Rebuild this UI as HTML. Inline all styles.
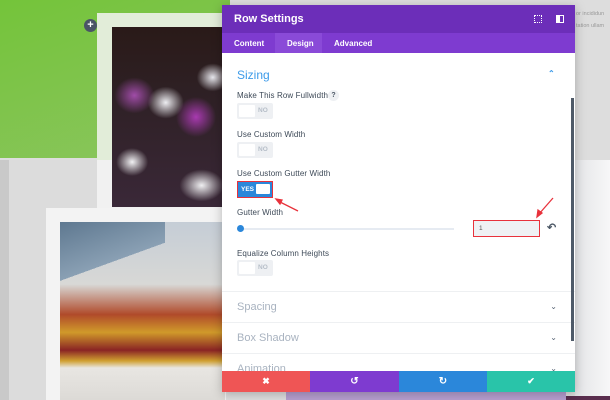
<!DOCTYPE html>
<html><head><meta charset="utf-8"><style>
*{margin:0;padding:0;box-sizing:border-box}
body{width:610px;height:400px;overflow:hidden;position:relative;background:#dedede;font-family:"Liberation Sans",sans-serif}
.abs{position:absolute}
.lbl{position:absolute;left:15px;font-size:8px;color:#3e4a58;letter-spacing:0.1px}
.tog{position:absolute;left:15px;width:36px;height:16px;background:#eef0f3;border-radius:2px}
.tog i{position:absolute;left:2px;top:2px;width:16px;height:12px;background:#fff;border-radius:1px}
.tog b{position:absolute;left:21px;top:4px;font-size:6.5px;color:#b6bec8}
.sec{position:absolute;left:15px;font-size:11px;color:#a9b3c0}
.chev{position:absolute;right:18px;font-size:8px;color:#5a6676}
.hr{position:absolute;left:0;width:100%;height:1px;background:#eef0f2}
</style></head><body>
<div class="abs" style="left:0;top:0;width:230px;height:158px;background:linear-gradient(160deg,#74c43a,#8cc560)"></div>
<div class="abs" style="left:0;top:160px;width:9px;height:240px;background:#c9c9c9"></div>
<div class="abs" style="left:9px;top:160px;width:90px;height:240px;background:#dcdcdc"></div>
<div class="abs" style="left:575px;top:0;width:35px;height:160px;background:#dddddd"></div>
<div class="abs" style="left:575px;top:160px;width:35px;height:240px;background:linear-gradient(90deg,#e4e5e7,#f7f7f8)"></div>
<div class="abs" style="left:576px;top:8px;font-size:5.5px;color:#999;line-height:12px">or incididun<br>tation ullam</div>
<div class="abs" style="left:97px;top:13px;width:130px;height:210px;background:#e2edd9"></div>
<div class="abs" style="left:97px;top:160px;width:130px;height:62px;background:#f1f1f1"></div>
<div class="abs" style="left:112px;top:27px;width:112px;height:180px;background:radial-gradient(ellipse 20px 18px at 20% 38%,#a04ca8,transparent),radial-gradient(ellipse 20px 20px at 75% 50%,#a83ab0,transparent),radial-gradient(ellipse 16px 14px at 18% 75%,#f2f2f4,transparent),radial-gradient(ellipse 18px 16px at 48% 42%,#eeeef2,transparent),radial-gradient(ellipse 22px 16px at 80% 88%,#f0f0f2,transparent),radial-gradient(ellipse 16px 14px at 90% 28%,#e8e8ee,transparent),linear-gradient(#2a1a18,#2e2024 35%,#3a2838)"></div>
<div class="abs" style="left:84px;top:19px;width:13px;height:13px;border-radius:50%;background:#4a5466;color:#fff;font-size:11px;line-height:13px;text-align:center;font-weight:bold">+</div>
<div class="abs" style="left:46px;top:208px;width:180px;height:192px;background:#f3f3f3"></div>
<div class="abs" style="left:60px;top:222px;width:165px;height:178px;background:linear-gradient(#c5cdd6,#d8d8d6 35%,#b04a2a 52%,#d09a2a 62%,#8a2424 72%,#d0a030 78%,#e8e6e2 82%,#dcdad6)"></div>
<div class="abs" style="left:60px;top:222px;width:105px;height:60px;background:linear-gradient(160deg,#5e7890,#8aa0b4 60%,transparent 60%)"></div>
<div class="abs" style="left:286px;top:392px;width:280px;height:8px;background:#b79fd0"></div>
<div class="abs" style="left:566px;top:396px;width:44px;height:4px;background:#5a2e4e"></div>
<div class="abs" style="left:222px;top:5px;width:353px;height:387px;background:#fff;box-shadow:0 2px 10px rgba(0,0,0,.25);overflow:hidden">
 <div class="abs" style="left:0;top:0;width:100%;height:28px;background:#6c2eb9"></div>
 <div class="abs" style="left:12px;top:8px;font-size:11px;font-weight:bold;color:#fff">Row Settings</div>
 <div class="abs" style="left:312px;top:10px;width:8px;height:8px;border:1.5px dotted #fff"></div>
 <div class="abs" style="left:334px;top:10px;width:8px;height:8px;border:1.5px solid #fff;border-left-width:4px"></div>
 <div class="abs" style="left:0;top:28px;width:100%;height:20px;background:#7e3bd0"></div>
 <div class="abs" style="left:53px;top:28px;width:47px;height:20px;background:#8a4ad8"></div>
 <div class="abs" style="left:12px;top:34px;font-size:8px;font-weight:bold;color:#fff">Content</div>
 <div class="abs" style="left:65px;top:34px;font-size:8px;font-weight:bold;color:#fff">Design</div>
 <div class="abs" style="left:112px;top:34px;font-size:8px;font-weight:bold;color:#fff">Advanced</div>
 <div class="abs" style="left:15px;top:63px;font-size:12px;color:#3d9be9">Sizing</div>
 <div class="abs" style="left:326px;top:64px;font-size:8px;color:#3d9be9;font-weight:bold">&#8963;</div>
 <div class="lbl" style="top:86px">Make This Row Fullwidth</div>
 <div class="abs" style="left:106px;top:85px;width:11px;height:11px;border-radius:50%;background:#eef0f3;font-size:7px;font-weight:bold;color:#4c5866;text-align:center;line-height:11px">?</div>
 <div class="tog" style="top:98px"><i></i><b>NO</b></div>
 <div class="lbl" style="top:125px">Use Custom Width</div>
 <div class="tog" style="top:137px"><i></i><b>NO</b></div>
 <div class="lbl" style="top:164px">Use Custom Gutter Width</div>
 <div class="abs" style="left:15px;top:176px;width:36px;height:17px;border:1.5px solid #e8323c;background:#2b87da">
  <span class="abs" style="left:3px;top:4px;font-size:6.5px;font-weight:bold;color:#fff">YES</span>
  <span class="abs" style="left:18px;top:2px;width:14px;height:10px;background:#fff;border-radius:1px"></span></div>
 <div class="lbl" style="top:203px">Gutter Width</div>
 <div class="abs" style="left:17px;top:223px;width:215px;height:2px;background:#e6ebf2"></div>
 <div class="abs" style="left:15px;top:220px;width:7px;height:7px;border-radius:50%;background:#2b87da"></div>
 <div class="abs" style="left:251px;top:215px;width:67px;height:17px;border:1.5px solid #e8323c;background:#eff1f4;font-size:6.5px;color:#555;padding:4px 5px">1</div>
 <div class="abs" style="left:325px;top:216px;font-size:11px;color:#4c5866;font-weight:bold">&#8630;</div>
 <div class="lbl" style="top:244px">Equalize Column Heights</div>
 <div class="tog" style="top:255px"><i></i><b>NO</b></div>
 <div class="hr" style="top:286px"></div>
 <div class="sec" style="top:296px">Spacing</div><div class="chev" style="top:297px">&#8964;</div>
 <div class="hr" style="top:317px"></div>
 <div class="sec" style="top:327px">Box Shadow</div><div class="chev" style="top:328px">&#8964;</div>
 <div class="hr" style="top:348px"></div>
 <div class="sec" style="top:358px">Animation</div><div class="chev" style="top:359px">&#8964;</div>
 <div class="abs" style="left:349px;top:93px;width:3px;height:243px;background:#4e5a68"></div>
 <div class="abs" style="left:0;top:366px;width:88px;height:21px;background:#ef5555;color:#fff;text-align:center;font-size:9px;line-height:21px;font-weight:bold">&#10006;</div>
 <div class="abs" style="left:88px;top:366px;width:89px;height:21px;background:#7e3bd0;color:#fff;text-align:center;font-size:10px;line-height:21px;font-weight:bold">&#8634;</div>
 <div class="abs" style="left:177px;top:366px;width:88px;height:21px;background:#2b87da;color:#fff;text-align:center;font-size:10px;line-height:21px;font-weight:bold">&#8635;</div>
 <div class="abs" style="left:265px;top:366px;width:88px;height:21px;background:#29c4a9;color:#fff;text-align:center;font-size:9px;line-height:21px;font-weight:bold">&#10004;</div>
</div>
<svg class="abs" style="left:0;top:0" width="610" height="400"><g stroke="#e8323c" stroke-width="1.3" fill="#e8323c">
<line x1="298" y1="211" x2="278" y2="201"/><polygon points="276,199 282,200 280,204" />
<line x1="553" y1="198" x2="539" y2="214"/><polygon points="537,217 538,210 542,213"/>
</g></svg>
</body></html>
